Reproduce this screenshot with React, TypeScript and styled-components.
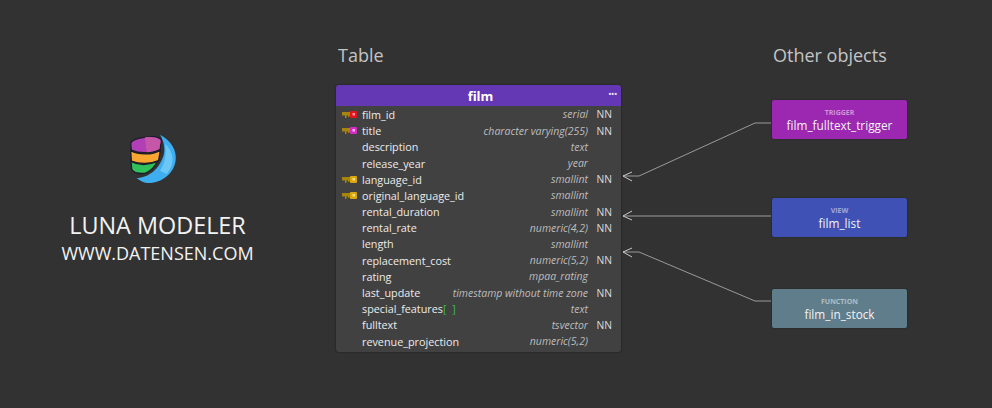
import React from "react";
import styled, { createGlobalStyle } from "styled-components";

const Global = createGlobalStyle`
  html, body { margin: 0; padding: 0; background: #323232; }
  body { font-family: "Open Sans", "Liberation Sans", sans-serif; }
`;

const Page = styled.div`
  position: relative;
  width: 992px;
  height: 408px;
  overflow: hidden;
  background: #323232;
  display: flex;
`;

const Brand = styled.div`
  width: 315px;
  padding-top: 134px;
  display: flex;
  flex-direction: column;
  align-items: center;
  color: #f2f2f2;
`;

const LogoSlot = styled.div`
  height: 50px;
  margin-right: 8px;
`;

const BrandName = styled.div`
  margin-top: 25px;
  font-size: 23.4px;
  line-height: 32px;
`;

const BrandUrl = styled.div`
  font-size: 18px;
  line-height: 25px;
`;

const Column = styled.div<{ $left: number; $width: number }>`
  margin-left: ${(p) => p.$left}px;
  width: ${(p) => p.$width}px;
  padding-top: 43px;
`;

const Heading = styled.div<{ $inset: number }>`
  font-size: 18px;
  line-height: 25px;
  color: #c4c4c4;
  padding-left: ${(p) => p.$inset}px;
  height: 25px;
`;

const TableCard = styled.div`
  margin-top: 17px;
  background: #414141;
  border-radius: 3px;
  overflow: hidden;
  box-shadow: 0 0 2px rgba(0, 0, 0, 0.6);
  height: 267px;
`;

const TableHeader = styled.div`
  position: relative;
  height: 21px;
  padding-left: 4px;
  background: #6437b5;
  color: #fff;
  font-size: 13px;
  font-weight: 700;
  line-height: 22px;
  text-align: center;
`;

const Dots = styled.span`
  position: absolute;
  right: 4px;
  top: -1px;
  font-size: 7.5px;
  line-height: 20px;
  font-weight: 700;
  color: #e6e0f2;
`;

const Rows = styled.div`
  padding-top: 0.4px;
`;

const Row = styled.div`
  display: grid;
  grid-template-columns: 26px 1fr auto 33px;
  align-items: center;
  height: 16.2px;
  font-size: 10.8px;
  white-space: nowrap;
`;

const KeyCell = styled.div`
  display: flex;
  justify-content: flex-end;
  padding-right: 5px;
  align-items: center;
`;

const FieldName = styled.span`
  color: #ececec;
`;

const ListMark = styled.span`
  color: #3fb94d;
  word-spacing: 3px;
`;

const FieldType = styled.span`
  color: #bdbdbd;
  font-style: italic;
  font-size: 10.5px;
  text-align: right;
`;

const NotNull = styled.span`
  color: #dcdcdc;
  font-size: 10.3px;
  padding-left: 8.5px;
`;

const ObjectStack = styled.div`
  margin-top: 32px;
  display: flex;
  flex-direction: column;
`;

const ObjectBox = styled.div<{ $bg: string; $gap: number }>`
  height: 39px;
  margin-bottom: ${(p) => p.$gap}px;
  background: ${(p) => p.$bg};
  border-radius: 2px;
  box-shadow: 0 0 2px rgba(0, 0, 0, 0.4);
  display: flex;
  flex-direction: column;
  align-items: center;
  padding-top: 8px;
  box-sizing: border-box;
`;

const ObjectKind = styled.div`
  font-size: 7px;
  line-height: 9px;
  font-weight: 700;
  color: rgba(255, 255, 255, 0.5);
`;

const ObjectName = styled.div`
  font-size: 11.8px;
  line-height: 16px;
  color: #f2f2f2;
`;

const Connectors = styled.svg`
  position: absolute;
  left: 0;
  top: 0;
`;

const LogoMark = () => (
  <svg width="47" height="50" viewBox="60 40 141 150">
    <path d="M150 42 C185 60 200 90 197 118 C193 160 150 190 112 187 C100 186 88 180 80 172 C115 172 150 145 162 100 C166 80 160 58 150 42 Z" fill="#3eaef0" />
    <path d="M165 70 C190 90 198 130 170 160 L150 150 C165 125 170 100 165 70 Z" fill="#6cc6f6" />
    <path d="M62 68 C66 55 100 48 130 48 C146 49 155 54 154 62 L150 86 C120 100 85 98 64 88 Z" fill="#b23fb5" stroke="#1d1d2a" strokeWidth="4" />
    <path d="M105 50 C120 47 142 49 152 60 L148 85 C135 92 120 94 110 95 Z" fill="#c657a8" />
    <path d="M62 90 C85 102 125 104 151 89 L146 120 C120 132 85 130 64 121 Z" fill="#f8a531" stroke="#1d1d2a" strokeWidth="4" />
    <path d="M63 122 C85 134 115 134 142 122 C134 140 122 152 105 158 C85 160 70 154 65 146 Z" fill="#2fc15a" stroke="#1d1d2a" strokeWidth="4" />
  </svg>
);

const KeyIcon = ({ head, spot }: { head: string; spot: string }) => (
  <svg width="15" height="7" viewBox="0 0 15 7">
    <path d="M0 1 H9 V4.5 H7.5 V6 H6 V4.5 H4.5 V7 H3 V4.5 H0 Z" fill="#a5850f" />
    <rect x="8" y="0" width="7" height="7" rx="1" fill={head} />
    <rect x="10.5" y="2" width="2.5" height="2.5" fill={spot} />
  </svg>
);

type Key = { head: string; spot: string };
type Field = { name: string; type: string; nn?: boolean; key?: Key; list?: boolean };

const primaryKey: Key = { head: "#e3121e", spot: "#f59a9a" };
const uniqueKey: Key = { head: "#d52bc4", spot: "#f4b5ee" };
const foreignKey: Key = { head: "#d9a60f", spot: "#f2df7c" };

const fields: Field[] = [
  { name: "film_id", type: "serial", nn: true, key: primaryKey },
  { name: "title", type: "character varying(255)", nn: true, key: uniqueKey },
  { name: "description", type: "text" },
  { name: "release_year", type: "year" },
  { name: "language_id", type: "smallint", nn: true, key: foreignKey },
  { name: "original_language_id", type: "smallint", key: foreignKey },
  { name: "rental_duration", type: "smallint", nn: true },
  { name: "rental_rate", type: "numeric(4,2)", nn: true },
  { name: "length", type: "smallint" },
  { name: "replacement_cost", type: "numeric(5,2)", nn: true },
  { name: "rating", type: "mpaa_rating" },
  { name: "last_update", type: "timestamp without time zone", nn: true },
  { name: "special_features", type: "text", list: true },
  { name: "fulltext", type: "tsvector", nn: true },
  { name: "revenue_projection", type: "numeric(5,2)" },
];

const Arrow = ({ line, tip }: { line: string; tip: string }) => (
  <>
    <polyline points={line} fill="none" stroke="#9a9a9a" strokeWidth="1" />
    <polyline points={tip} fill="none" stroke="#c8c8c8" strokeWidth="1" />
  </>
);

export default function App() {
  return (
    <Page>
      <Global />
      <Brand>
        <LogoSlot>
          <LogoMark />
        </LogoSlot>
        <BrandName>LUNA MODELER</BrandName>
        <BrandUrl>WWW.DATENSEN.COM</BrandUrl>
      </Brand>
      <Column $left={21} $width={285}>
        <Heading $inset={2}>Table</Heading>
        <TableCard>
          <TableHeader>
            film
            <Dots>•••</Dots>
          </TableHeader>
          <Rows>
            {fields.map((f) => (
              <Row key={f.name}>
                <KeyCell>{f.key && <KeyIcon head={f.key.head} spot={f.key.spot} />}</KeyCell>
                <FieldName>
                  {f.name}
                  {f.list && <ListMark>[ ]</ListMark>}
                </FieldName>
                <FieldType>{f.type}</FieldType>
                <NotNull>{f.nn ? "NN" : ""}</NotNull>
              </Row>
            ))}
          </Rows>
        </TableCard>
      </Column>
      <Column $left={151} $width={135}>
        <Heading $inset={1}>Other objects</Heading>
        <ObjectStack>
          <ObjectBox $bg="#9c27b0" $gap={59}>
            <ObjectKind>TRIGGER</ObjectKind>
            <ObjectName>film_fulltext_trigger</ObjectName>
          </ObjectBox>
          <ObjectBox $bg="#3f51b5" $gap={52}>
            <ObjectKind>VIEW</ObjectKind>
            <ObjectName>film_list</ObjectName>
          </ObjectBox>
          <ObjectBox $bg="#607d8b" $gap={0}>
            <ObjectKind>FUNCTION</ObjectKind>
            <ObjectName>film_in_stock</ObjectName>
          </ObjectBox>
        </ObjectStack>
      </Column>
      <Connectors width="992" height="408" viewBox="0 0 992 408">
        <Arrow line="771,123 755,123 639,176 623,176" tip="632,172 623,176 632,181" />
        <Arrow line="771,216 623,216" tip="632,211 623,216 632,220" />
        <Arrow line="771,301 755,301 639,252 623,252" tip="632,248 623,252 632,257" />
      </Connectors>
    </Page>
  );
}
